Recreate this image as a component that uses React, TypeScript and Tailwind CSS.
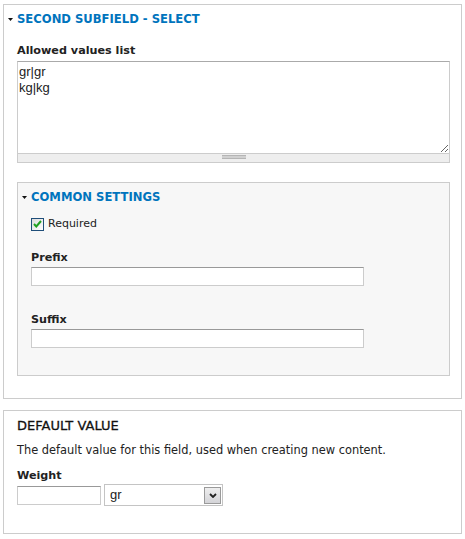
import React from "react";

const Triangle = () => (
  <svg width="5" height="3" viewBox="0 0 5 3" className="shrink-0">
    <path d="M0 0h5L2.5 3z" fill="#111" />
  </svg>
);

const Legend = ({ children }: { children: React.ReactNode }) => (
  <div className="-ml-[9px] flex items-center gap-[4px]">
    <Triangle />
    <span className="text-[11.6px] leading-[16px] font-bold uppercase text-[#0074bd]">
      {children}
    </span>
  </div>
);

const Label = ({ children, className = "" }: { children: React.ReactNode; className?: string }) => (
  <div className={`text-[11.2px] leading-[14px] font-bold text-[#222] ${className}`}>{children}</div>
);

const TextInput = ({ className = "" }: { className?: string }) => (
  <input
    type="text"
    className={`block h-[19px] border border-[#ccc] border-t-[#999] bg-white outline-none ${className}`}
  />
);

const Checkbox = () => (
  <div className="flex h-[13px] w-[13px] items-center justify-center border border-[#1f4e79] bg-gradient-to-br from-[#dcdcdc] to-white">
    <svg width="9" height="8" viewBox="0 0 9 8">
      <path d="M1 4l2.3 2.5L8 1" fill="none" stroke="#21a121" strokeWidth="2" />
    </svg>
  </div>
);

export default function App() {
  return (
    <div className="min-h-screen bg-white px-[3px] pt-[4px] font-['DejaVu_Sans',sans-serif] text-[#333]">
      {/* second subfield */}
      <div className="border border-[#ccc] pl-[13px] pr-[11px] pt-[6px] pb-[22px]">
        <Legend>Second subfield - Select</Legend>

        <Label className="mt-[17px]">Allowed values list</Label>
        <div className="mt-[3px]">
          <textarea
            defaultValue={"gr|gr\nkg|kg"}
            className="block h-[93px] w-full resize-y border border-[#ccc] border-t-[#aaa] bg-white pl-[1px] pt-[2px] font-['Liberation_Sans',sans-serif] text-[13px] leading-[16px] text-[#222] outline-none"
          />
          <div className="flex h-[9px] justify-center border border-t-0 border-[#ccc] bg-[#eee] pt-[1px]">
            <div className="h-[4px] w-[24px] border-y border-[#b5b5b5] bg-[#d0d0d0]" />
          </div>
        </div>

        {/* common settings */}
        <div className="mt-[19px] border border-[#ccc] bg-[#f7f7f7] pl-[13px] pt-[6px] pb-[27px]">
          <Legend>Common settings</Legend>

          <div className="mt-[12px] flex items-center gap-[4px]">
            <Checkbox />
            <span className="text-[11px] leading-[14px] text-[#222]">Required</span>
          </div>

          <Label className="mt-[20px]">Prefix</Label>
          <TextInput className="mt-[2px] w-[333px]" />

          <Label className="mt-[27px]">Suffix</Label>
          <TextInput className="mt-[2px] w-[333px]" />
        </div>
      </div>

      {/* default value */}
      <div className="mt-[11px] border border-[#ccc] pl-[13px] pt-[7px] pb-[27px]">
        <div className="text-[13px] leading-[16px] uppercase text-[#111] [-webkit-text-stroke:0.3px_#111]">Default value</div>
        <p className="mt-[9px] text-[11.4px] leading-[14px] text-[#222]">
          The default value for this field, used when creating new content.
        </p>
        <Label className="mt-[12px]">Weight</Label>
        <div className="mt-[1px] flex items-start gap-[3px]">
          <TextInput className="mt-[2px] w-[84px]" />
          <div className="flex h-[22px] w-[119px] items-center justify-between border border-[#c4c4c4] bg-white pl-[5px] pr-[1px]">
            <span className="font-['Liberation_Sans',sans-serif] text-[13px] text-[#222]">gr</span>
            <div className="flex h-[17px] w-[17px] items-center justify-center border border-[#9a9a9a] bg-gradient-to-b from-[#eeeeee] to-[#d4d4d8]">
              <svg width="8" height="5" viewBox="0 0 8 5">
                <path d="M1 1l3 3 3-3" fill="none" stroke="#222" strokeWidth="1.8" />
              </svg>
            </div>
          </div>
        </div>
      </div>
    </div>
  );
}
